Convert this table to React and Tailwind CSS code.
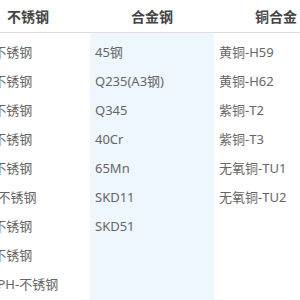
const COLUMNS = [
  {
    title: "不锈钢",
    items: [
      "201不锈钢",
      "202不锈钢",
      "304不锈钢",
      "316不锈钢",
      "430不锈钢",
      "304-不锈钢",
      "310不锈钢",
      "321不锈钢",
      "17-4PH-不锈钢",
    ],
  },
  {
    title: "合金钢",
    items: ["45钢", "Q235(A3钢)", "Q345", "40Cr", "65Mn", "SKD11", "SKD51"],
    tint: true,
  },
  {
    title: "铜合金",
    items: ["黄铜-H59", "黄铜-H62", "紫铜-T2", "紫铜-T3", "无氧铜-TU1", "无氧铜-TU2"],
  },
];

export default function App() {
  return (
    <div
      className="w-[300px] h-[300px] overflow-hidden bg-white"
      style={{ fontFamily: '"Noto Sans", "Noto Sans CJK SC", sans-serif' }}
    >
      <div className="ml-[-34px] flex flex-col">
        {/* header */}
        <div className="grid grid-cols-[124px_124px_124px] h-[33px] border-b border-[#ead9dd]">
          {COLUMNS.map((c) => (
            <div
              key={c.title}
              className="flex items-center justify-center pt-[1px] text-[14px] font-bold text-[#444]"
            >
              {c.title}
            </div>
          ))}
        </div>
        {/* body */}
        <div className="grid grid-cols-[124px_124px_124px] h-[280px]">
          {COLUMNS.map((c) => (
            <div
              key={c.title}
              className={`flex flex-col pt-[5px] ${c.tint ? "bg-[#eef6fe]" : ""}`}
            >
              {c.items.map((it) => (
                <div
                  key={it}
                  className="h-[29px] flex items-center pl-[5px] text-[13px] text-[#666] whitespace-nowrap"
                >
                  {it}
                </div>
              ))}
            </div>
          ))}
        </div>
      </div>
    </div>
  );
}
